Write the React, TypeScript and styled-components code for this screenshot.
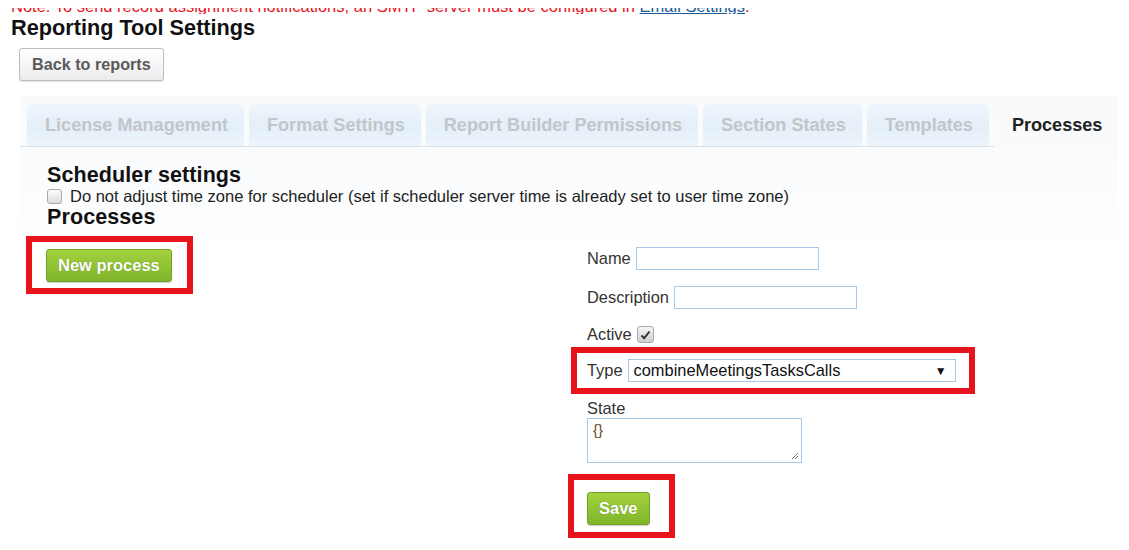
import React from 'react';
import styled, { createGlobalStyle } from 'styled-components';

const GlobalStyle = createGlobalStyle`
  html, body {
    margin: 0;
    padding: 0;
    background: #ffffff;
  }

  body {
    font-family: 'Liberation Sans', Arial, sans-serif;
    color: #222;
  }
`;

let Page = styled.div`
  width: 1129px;
  height: 550px;
  overflow: hidden;
  padding: 8px 0 0 11px;
  box-sizing: border-box;
`;

// only the bottom of the note line shows at the top of the shot
let NoteClip = styled.div`
  height: 6px;
  overflow: hidden;
  display: flex;
  align-items: flex-end;
`;

let NoteText = styled.span`
  font-size: 16.5px;
  line-height: 16px;
  color: #e8141c;
  white-space: nowrap;

  a {
    color: #1a5a96;
    text-decoration: underline;
  }
`;

let Title = styled.h1`
  margin: 2px 0 0;
  font-size: 21.7px;
  line-height: 24px;
  font-weight: bold;
  color: #111;
`;

let BackButton = styled.button`
  margin: 8px 0 0 8px;
  height: 33px;
  padding: 0 12px;
  border: 1px solid #bdbdbd;
  border-radius: 3px;
  background: linear-gradient(#ffffff, #ececec);
  box-shadow: 0 1px 1px rgba(0, 0, 0, 0.12);
  font-family: inherit;
  font-size: 16.2px;
  font-weight: bold;
  color: #5a5a5a;
`;

let TabWidget = styled.div`
  margin: 15px 0 0 9px;
  width: 1098px;
  background: linear-gradient(#f8fafc, #fbfcfd 90px, #ffffff 160px);
`;

let TabBar = styled.div`
  display: flex;
  gap: 5px;
  padding: 8px 0 0 7px;
  border-bottom: 1px solid #dcdfe2;
`;

let Tab = styled.div<{ $active?: boolean }>`
  flex-shrink: 0;
  white-space: nowrap;
  padding: 0 16px 0 18px;
  display: flex;
  align-items: center;
  border-radius: 6px 6px 0 0;
  font-size: 18.1px;
  font-weight: bold;
  color: ${(p) => (p.$active ? '#222' : '#c3c6c9')};
  background: ${(p) =>
    p.$active ? '#f9fafb' : 'linear-gradient(#eef5fc, #e4eff9 55%, #edf5fc)'};
  margin-bottom: ${(p) => (p.$active ? '-1px' : '0')};
  height: ${(p) => (p.$active ? '43px' : '42px')};
`;

let Content = styled.div`
  padding: 17px 0 0 27px;
`;

let SectionTitle = styled.h2`
  margin: 0;
  font-size: 21.5px;
  line-height: 22px;
  font-weight: bold;
  letter-spacing: 0.1px;
  color: #111;
`;

let CheckRow = styled.label`
  display: flex;
  align-items: center;
  gap: 8px;
  font-size: 16.5px;
  line-height: 20px;
  color: #222;
`;

let Check = styled.span`
  width: 15px;
  height: 15px;
  box-sizing: border-box;
  border: 1px solid #a9a9a9;
  border-radius: 3px;
  background: linear-gradient(#fdfdfd, #dcdcdc);
  display: inline-flex;
  align-items: center;
  justify-content: center;
  flex-shrink: 0;
`;

let BigCheck = styled(Check)`
  width: 17px;
  height: 17px;
  background: linear-gradient(#f4f4f4, #cfcfcf);
`;

let Columns = styled.div`
  display: flex;
  margin-top: 8px;
`;

let LeftColumn = styled.div`
  width: 561px;
  margin-left: -21px;
`;

let RightColumn = styled.div`
  display: flex;
  flex-direction: column;
  padding-top: 11px;
`;

let Highlight = styled.div<{ $pad: string }>`
  display: inline-flex;
  align-items: center;
  align-self: flex-start;
  border: 6px solid #e8141c;
  padding: ${(p) => p.$pad};
`;

let GreenButton = styled.button`
  height: 33px;
  padding: 0 11px;
  border: 1px solid #73a326;
  border-radius: 3px;
  background: linear-gradient(#a3d13f, #80b52b);
  box-shadow: 0 1px 1px rgba(0, 0, 0, 0.2);
  font-family: inherit;
  font-size: 16.5px;
  font-weight: bold;
  color: #fff;
  text-shadow: 0 0 1px rgba(60, 90, 10, 0.6);
`;

let FieldRow = styled.div<{ $top?: number }>`
  display: flex;
  align-items: center;
  gap: 5px;
  margin-top: ${(p) => p.$top ?? 0}px;
  font-size: 16.4px;
  color: #333;
`;

let TextInput = styled.div<{ $w: number }>`
  width: ${(p) => p.$w}px;
  height: 23px;
  box-sizing: border-box;
  border: 1px solid #a9c8e8;
  background: #fff;
`;

let Select = styled.div`
  width: 328px;
  height: 23px;
  box-sizing: border-box;
  border: 1px solid #a9c8e8;
  background: #fff;
  display: flex;
  align-items: center;
  justify-content: space-between;
  padding: 0 8px 0 5px;
  font-size: 16.4px;
  color: #111;
`;

let Arrow = styled.span`
  font-size: 12px;
  color: #111;
`;

let StateLabel = styled.div`
  margin-top: 7px;
  font-size: 16.4px;
  line-height: 15px;
  color: #333;
`;

let TextArea = styled.div`
  position: relative;
  width: 215px;
  height: 45px;
  box-sizing: border-box;
  margin-top: 2px;
  border: 1px solid #a9c8e8;
  padding: 2px 5px;
  font-size: 15px;
  color: #6b4a1a;
`;

let Grip = styled.svg`
  position: absolute;
  right: 2px;
  bottom: 2px;
`;

const tabs = [
  'License Management',
  'Format Settings',
  'Report Builder Permissions',
  'Section States',
  'Templates',
  'Processes',
];

const App: React.FC = () => {
  return (
    <>
      <GlobalStyle />
      <Page>
        <NoteClip>
          <NoteText>
            Note: To send record assignment notifications, an SMTP server must be
            configured in <a href="#">Email Settings</a>.
          </NoteText>
        </NoteClip>
        <Title>Reporting Tool Settings</Title>
        <BackButton>Back to reports</BackButton>
        <TabWidget>
          <TabBar>
            {tabs.map((t) => (
              <Tab key={t} $active={t === 'Processes'}>
                {t}
              </Tab>
            ))}
          </TabBar>
          <Content>
            <SectionTitle>Scheduler settings</SectionTitle>
            <CheckRow>
              <Check />
              Do not adjust time zone for scheduler (set if scheduler server time is
              already set to user time zone)
            </CheckRow>
            <SectionTitle>Processes</SectionTitle>
            <Columns>
              <LeftColumn>
                <Highlight $pad="7px 15px 6px 14px">
                  <GreenButton>New process</GreenButton>
                </Highlight>
              </LeftColumn>
              <RightColumn>
                <FieldRow>
                  Name <TextInput $w={183} />
                </FieldRow>
                <FieldRow $top={16}>
                  Description <TextInput $w={183} />
                </FieldRow>
                <FieldRow $top={16}>
                  Active
                  <BigCheck>
                    <svg width="11" height="10" viewBox="0 0 11 10">
                      <path
                        d="M1.5 5.5 L4.2 8.2 L9.5 1.5"
                        fill="none"
                        stroke="#333"
                        strokeWidth="2"
                      />
                    </svg>
                  </BigCheck>
                </FieldRow>
                <Highlight
                  $pad="6px 13px 6px 10px"
                  style={{ marginLeft: -16, marginTop: 3 }}
                >
                  <FieldRow>
                    Type
                    <Select>
                      combineMeetingsTasksCalls
                      <Arrow>▼</Arrow>
                    </Select>
                  </FieldRow>
                </Highlight>
                <StateLabel>State</StateLabel>
                <TextArea>
                  {'{}'}
                  <Grip width="10" height="10" viewBox="0 0 10 10">
                    <path d="M9 3 L3 9 M9 6 L6 9" stroke="#777" strokeWidth="1" />
                  </Grip>
                </TextArea>
                <Highlight
                  $pad="12px 19px 7px 13px"
                  style={{ marginLeft: -19, marginTop: 11 }}
                >
                  <GreenButton>Save</GreenButton>
                </Highlight>
              </RightColumn>
            </Columns>
          </Content>
        </TabWidget>
      </Page>
    </>
  );
};

export default App;
